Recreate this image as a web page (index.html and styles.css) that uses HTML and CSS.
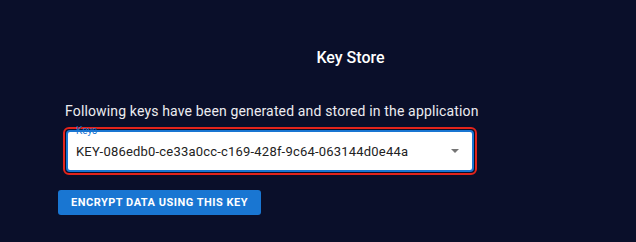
FILE: index.html
```html
<!DOCTYPE html>
<html lang="en">
<head>
    <meta charset="UTF-8">
    <meta name="viewport" content="width=device-width, initial-scale=1.0">
    <title>Key Store</title>
    <link rel="stylesheet" href="styles.css">
</head>
<body>
    <div class="container">
        <h1>Key Store</h1>

        <p class="intro">Following keys have been generated and stored in the application</p>

        <div class="highlight">
            <div class="key-select">
                <span class="key-label">Keys</span>
                <span class="key-value">KEY-086edb0-ce33a0cc-c169-428f-9c64-063144d0e44a</span>
                <span class="key-arrow"></span>
            </div>
        </div>

        <button class="encrypt-btn">Encrypt data using this key</button>
    </div>
</body>
</html>
```

FILE: styles.css
```css
body {
    margin: 0;
    font-family: Roboto, 'Liberation Sans', sans-serif;
    background-color: #0a0f2a;
    color: #fff;
    height: 242px;
}

.container {
    padding: 48px 0 0 65px;
}

h1 {
    margin: 0;
    font-size: 16px;
    font-weight: 500;
    line-height: 20px;
    text-align: center;
}

.intro {
    margin: 34px 0 0;
    font-size: 14px;
    line-height: 18px;
    letter-spacing: 0.15px;
    color: #ececf0;
}

/* red annotation box around the select */
.highlight {
    width: 408px;
    margin: 7px 0 0 -2px;
    padding: 1px;
    border: 2px solid #e3241b;
    border-radius: 6px;
}

.key-select {
    position: relative;
    display: flex;
    align-items: center;
    height: 38px;
    padding: 0 10px 0 8px;
    background: #fff;
    border: 2px solid #1976d2;
    border-radius: 4px;
}

.key-label {
    position: absolute;
    top: -6px;
    left: 8px;
    font-size: 10px;
    line-height: 10px;
    color: #1976d2;
}

.key-value {
    flex: 1;
    font-size: 13px;
    letter-spacing: 0.2px;
    color: #222;
}

.key-arrow {
    width: 0;
    height: 0;
    margin-right: 3px;
    border-left: 4px solid transparent;
    border-right: 4px solid transparent;
    border-top: 4px solid #757575;
}

.encrypt-btn {
    display: block;
    margin: 15px 0 0 -7px;
    height: 25px;
    padding: 0 13px;
    border: none;
    border-radius: 3px;
    background-color: #1976d2;
    color: #fff;
    font-family: Roboto, 'Liberation Sans', sans-serif;
    font-size: 11px;
    font-weight: 700;
    letter-spacing: 0.5px;
    text-transform: uppercase;
}
```
